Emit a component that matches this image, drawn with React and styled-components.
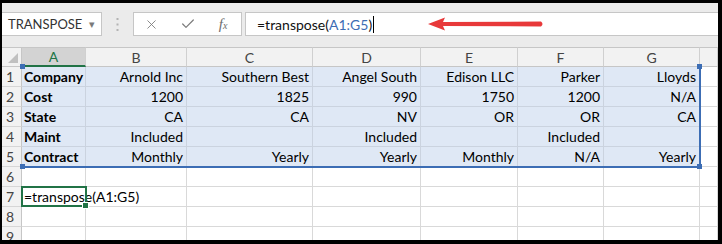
import React from 'react';
import styled, { createGlobalStyle } from 'styled-components';
import { X, Check } from 'lucide-react';

const GlobalStyle = createGlobalStyle`
  html, body {
    margin: 0;
    padding: 0;
    background: #fff;
  }
  body {
    font-family: Lato, "Liberation Sans", sans-serif;
  }
`;

const COLS = ['A', 'B', 'C', 'D', 'E', 'F', 'G', ''];

const DATA = [
  ['Company', 'Arnold Inc', 'Southern Best', 'Angel South', 'Edison LLC', 'Parker', 'Lloyds'],
  ['Cost', '1200', '1825', '990', '1750', '1200', 'N/A'],
  ['State', 'CA', 'CA', 'NV', 'OR', 'OR', 'CA'],
  ['Maint', 'Included', '', 'Included', '', 'Included', ''],
  ['Contract', 'Monthly', 'Yearly', 'Yearly', 'Monthly', 'N/A', 'Yearly'],
  [],
  [],
  [],
  [],
];

function App() {
  return (
    <>
      <GlobalStyle />
      <Frame>
        <Toolbar>
          <NameBox>
            TRANSPOSE
            <Caret>▾</Caret>
          </NameBox>
          <Grip>
            <svg width="3" height="13" viewBox="0 0 3 13">
              <rect x="0.5" y="0" width="2" height="2" fill="#b4b4b4" />
              <rect x="0.5" y="5.5" width="2" height="2" fill="#b4b4b4" />
              <rect x="0.5" y="11" width="2" height="2" fill="#b4b4b4" />
            </svg>
          </Grip>
          <FxBox>
            <FxButton>
              <X size={15} strokeWidth={1.4} />
            </FxButton>
            <FxButton>
              <Check size={16} strokeWidth={1.8} />
            </FxButton>
            <FxButton>
              <FxLabel>
                f<small>x</small>
              </FxLabel>
            </FxButton>
          </FxBox>
          <FormulaBox>
            =transpose(<RefText>A1:G5</RefText>)
            <Cursor />
            <Arrow width="116" height="16" viewBox="0 0 116 16">
              <path d="M0 8 L17 1.5 L15 6 L113 5.6 Q116 8 113 10.4 L15 10 L17 14.5 Z" fill="#e8393a" />
            </Arrow>
          </FormulaBox>
        </Toolbar>

        <Sheet>
          <Corner />
          {COLS.map((c) => (
            <ColHead key={c || 'H'} $active={c === 'A'}>
              {c}
            </ColHead>
          ))}

          {DATA.map((row, r) => (
            <React.Fragment key={r}>
              <RowHead>{r + 1}</RowHead>
              {COLS.map((c, ci) => {
                const value = r === 6 && ci === 0 ? '=transpose(A1:G5)' : row[ci] || '';
                return (
                  <Cell
                    key={c || 'H'}
                    $left={ci === 0}
                    $bold={ci === 0 && r < 5}
                    $sel={r < 5 && ci < 7}
                    $spill={r === 6 && ci === 0}
                  >
                    {value}
                  </Cell>
                );
              })}
            </React.Fragment>
          ))}

          <RefRange>
            <Handle $at="tl" />
            <Handle $at="tr" />
            <Handle $at="bl" />
            <Handle $at="br" />
          </RefRange>
          <ActiveCell>
            <FillHandle />
          </ActiveCell>
        </Sheet>
      </Frame>
    </>
  );
}

const Frame = styled.div`
  width: 722px;
  height: 244px;
  box-sizing: border-box;
  border: solid #000;
  border-width: 3px 4px 4px 2px;
  background: #fff;
  overflow: hidden;
  display: flex;
  flex-direction: column;
`;

const Toolbar = styled.div`
  flex: none;
  height: 44px;
  box-sizing: border-box;
  padding-top: 9px;
  background: #ebebeb;
  display: flex;
  align-items: flex-start;
`;

const NameBox = styled.div`
  width: 100px;
  height: 24px;
  box-sizing: border-box;
  background: #fff;
  border: 1px solid #c6c6c6;
  border-left: none;
  display: flex;
  align-items: center;
  padding: 0 6px 0 6px;
  font-size: 13px;
  color: #333;
`;

const Caret = styled.span`
  margin-left: auto;
  font-size: 11px;
  color: #7a7a7a;
`;

const Grip = styled.div`
  width: 31px;
  height: 24px;
  display: flex;
  align-items: center;
  justify-content: center;
`;

const FxBox = styled.div`
  width: 109px;
  height: 24px;
  box-sizing: border-box;
  background: #fff;
  border: 1px solid #c6c6c6;
  display: flex;
`;

const FxButton = styled.div`
  flex: 1;
  display: flex;
  align-items: center;
  justify-content: center;
  color: #7b7b7b;
`;

const FxLabel = styled.span`
  font-family: "Liberation Serif", serif;
  font-style: italic;
  font-size: 15px;
  color: #6e6e6e;
  small {
    font-size: 10px;
  }
`;

const FormulaBox = styled.div`
  position: relative;
  flex: 1;
  height: 24px;
  margin-left: 3px;
  box-sizing: border-box;
  background: #fff;
  border: 1px solid #c6c6c6;
  border-right: none;
  display: flex;
  align-items: center;
  padding-left: 11px;
  font-size: 14px;
  color: #111;
  white-space: pre;
`;

const RefText = styled.span`
  color: #3c6db4;
`;

const Cursor = styled.span`
  width: 1px;
  height: 17px;
  margin-left: 1px;
  background: #000;
`;

const Arrow = styled.svg`
  position: absolute;
  left: 182px;
  top: 3px;
`;

const Sheet = styled.div`
  flex: 1;
  position: relative;
  overflow: hidden;
  display: grid;
  grid-template-columns: 20px 64px 101px 126px 108px 97px 86px 96px 1fr;
  grid-template-rows: repeat(10, 20px);
  font-size: 14px;
`;

const Corner = styled.div`
  position: relative;
  background: #f2f2f2;
  border-top: 1px solid #c6c6c6;
  border-right: 1px solid #c6c6c6;
  border-bottom: 1px solid #c6c6c6;
  &::after {
    content: '';
    position: absolute;
    right: 3px;
    bottom: 3px;
    border-style: solid;
    border-width: 0 0 10px 10px;
    border-color: transparent transparent #c0c0c0 transparent;
  }
`;

const ColHead = styled.div`
  box-sizing: border-box;
  background: ${(p) => (p.$active ? '#d3d3d3' : '#f2f2f2')};
  color: ${(p) => (p.$active ? '#217346' : '#444')};
  border-top: 1px solid #c6c6c6;
  border-right: 1px solid #d0d0d0;
  border-bottom: ${(p) => (p.$active ? '2px solid #217346' : '1px solid #c6c6c6')};
  display: flex;
  align-items: center;
  justify-content: center;
  font-size: 14px;
`;

const RowHead = styled.div`
  box-sizing: border-box;
  background: #f2f2f2;
  color: #444;
  border-right: 1px solid #c6c6c6;
  border-bottom: 1px solid #d6d6d6;
  display: flex;
  align-items: center;
  padding-left: 4px;
  font-size: 14px;
`;

const Cell = styled.div`
  box-sizing: border-box;
  min-width: 0;
  background: ${(p) => (p.$sel ? '#dfe8f5' : 'transparent')};
  border-right: 1px solid ${(p) => (p.$sel ? '#cbd3df' : '#d9d9d9')};
  border-bottom: 1px solid ${(p) => (p.$sel ? '#cbd3df' : '#d9d9d9')};
  display: flex;
  align-items: center;
  justify-content: ${(p) => (p.$left ? 'flex-start' : 'flex-end')};
  padding: ${(p) => (p.$left ? '0 0 0 2px' : '0 3px 0 0')};
  font-weight: ${(p) => (p.$bold ? 700 : 400)};
  color: #000;
  white-space: nowrap;
  overflow: ${(p) => (p.$spill ? 'visible' : 'hidden')};
  position: ${(p) => (p.$spill ? 'relative' : 'static')};
  z-index: ${(p) => (p.$spill ? 1 : 'auto')};
`;

/* absolutely positioned grid children take their grid area as containing
   block and stay out of auto-placement */
const RefRange = styled.div`
  position: absolute;
  grid-row: 2 / 7;
  grid-column: 2 / 9;
  top: -1px;
  left: 0;
  right: -1px;
  bottom: -1px;
  border-right: 2px solid #3c6db4;
  border-bottom: 2px solid #3c6db4;
  pointer-events: none;
`;

const Handle = styled.span`
  position: absolute;
  width: 5px;
  height: 5px;
  background: #3c6db4;
  ${(p) => (p.$at[0] === 't' ? 'top: -2px;' : 'bottom: -3px;')}
  ${(p) => (p.$at[1] === 'l' ? 'left: -2px;' : 'right: -3px;')}
`;

const ActiveCell = styled.div`
  position: absolute;
  grid-row: 8 / 9;
  grid-column: 2 / 3;
  top: -1px;
  left: -1px;
  right: -1px;
  bottom: 0;
  z-index: 2;
  border: 2px solid #217346;
  pointer-events: none;
`;

const FillHandle = styled.span`
  position: absolute;
  right: -4px;
  bottom: -4px;
  width: 5px;
  height: 5px;
  background: #217346;
  border: 1px solid #fff;
`;

export default App;
